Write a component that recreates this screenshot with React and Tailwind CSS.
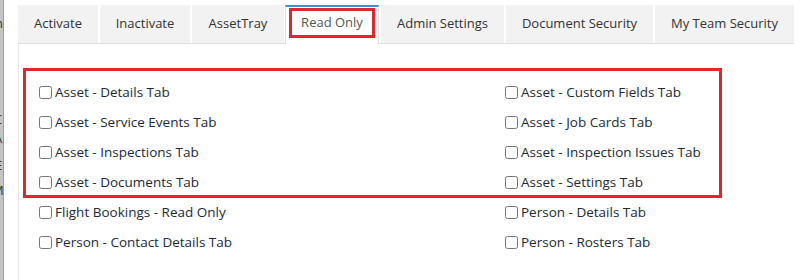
import React from 'react';

// 권한 탭 화면: 상단 탭 + 체크박스 목록
const tabs = [
    { label: 'Activate', w: 'w-[80px]' },
    { label: 'Inactivate', w: 'w-[90px]' },
    { label: 'AssetTray', w: 'w-[92px]' },
    { label: 'Read Only', w: 'w-[94px]', active: true },
    { label: 'Admin Settings', w: 'w-[123px]' },
    { label: 'Document Security', w: 'w-[147px]' },
    { label: 'My Team Security', w: 'w-[139px]' },
];

const boxed = [
    ['Asset - Details Tab', 'Asset - Custom Fields Tab'],
    ['Asset - Service Events Tab', 'Asset - Job Cards Tab'],
    ['Asset - Inspections Tab', 'Asset - Inspection Issues Tab'],
    ['Asset - Documents Tab', 'Asset - Settings Tab'],
];

const rest = [
    ['Flight Bookings - Read Only', 'Person - Details Tab'],
    ['Person - Contact Details Tab', 'Person - Rosters Tab'],
];

const Check = ({ label }) => (
    <label className="h-[20px] flex items-center gap-[3px] text-[13.5px] font-medium text-[#222a36]">
        <input type="checkbox" className="m-0 w-[13px] h-[13px] shrink-0" />
        <span className="whitespace-nowrap">{label}</span>
    </label>
);

const Rows = ({ items }) =>
    items.map(([a, b]) => (
        <React.Fragment key={a}>
            <Check label={a} />
            <Check label={b} />
        </React.Fragment>
    ));

// 왼쪽에 잘려 보이는 사이드바 가장자리
const SideStrip = () => (
    <div className="w-[4px] shrink-0 h-full bg-[#c4c4c4] border-r border-[#9c9c9c] overflow-hidden text-[13px] leading-[16px] text-[#333]">
        <div className="mt-[15px] -ml-[5px] h-[16px]">n</div>
        <div className="mt-[80px] -ml-[6px] h-[16px]">C</div>
        <div className="mt-[3px] -ml-[6px] h-[16px]">A</div>
        <div className="mt-[11px] -ml-[5px] h-[16px]">E</div>
        <div className="mt-[9px] -ml-[8px] h-[16px]">M</div>
    </div>
);

export default function App() {
    return (
        <div className="w-[802px] h-[280px] bg-white flex overflow-hidden font-['Open_Sans',sans-serif] text-[#333]">
            <SideStrip />
            <div className="w-[14px] shrink-0" />
            <div className="w-[776px] flex flex-col">
                <div className="mt-[5px] h-[39px] flex border-b border-[#dedede]">
                    {tabs.map((t, i) =>
                        t.active ? (
                            <div
                                key={t.label}
                                className={`${t.w} h-[39px] -mb-px ml-px bg-white border-t-2 border-t-[#3b8fe4] border-x border-x-[#dedede] flex items-start justify-center pt-px`}
                            >
                                <span className="w-[86px] h-[30px] border-[3px] border-[#e3262b] flex items-center justify-center text-[13px] text-[#555]">
                                    {t.label}
                                </span>
                            </div>
                        ) : (
                            <div
                                key={t.label}
                                className={`${t.w} h-[38px] ${i > 0 ? 'ml-[2px]' : ''} bg-[#f2f2f2] flex items-center justify-center text-[13px] text-[#333]`}
                            >
                                {t.label}
                            </div>
                        )
                    )}
                </div>
                <div className="flex-1 border-l border-[#e6e6e6] pl-[4px] pt-[24px]">
                    <div className="w-[699px] border-[3px] border-[#e3262b] pt-[11px] pb-[3px] pl-[13px] grid grid-cols-[466px_1fr] gap-y-[10px]">
                        <Rows items={boxed} />
                    </div>
                    <div className="mt-[4px] pl-[16px] grid grid-cols-[466px_1fr] gap-y-[10px] w-[699px]">
                        <Rows items={rest} />
                    </div>
                </div>
            </div>
        </div>
    );
}
